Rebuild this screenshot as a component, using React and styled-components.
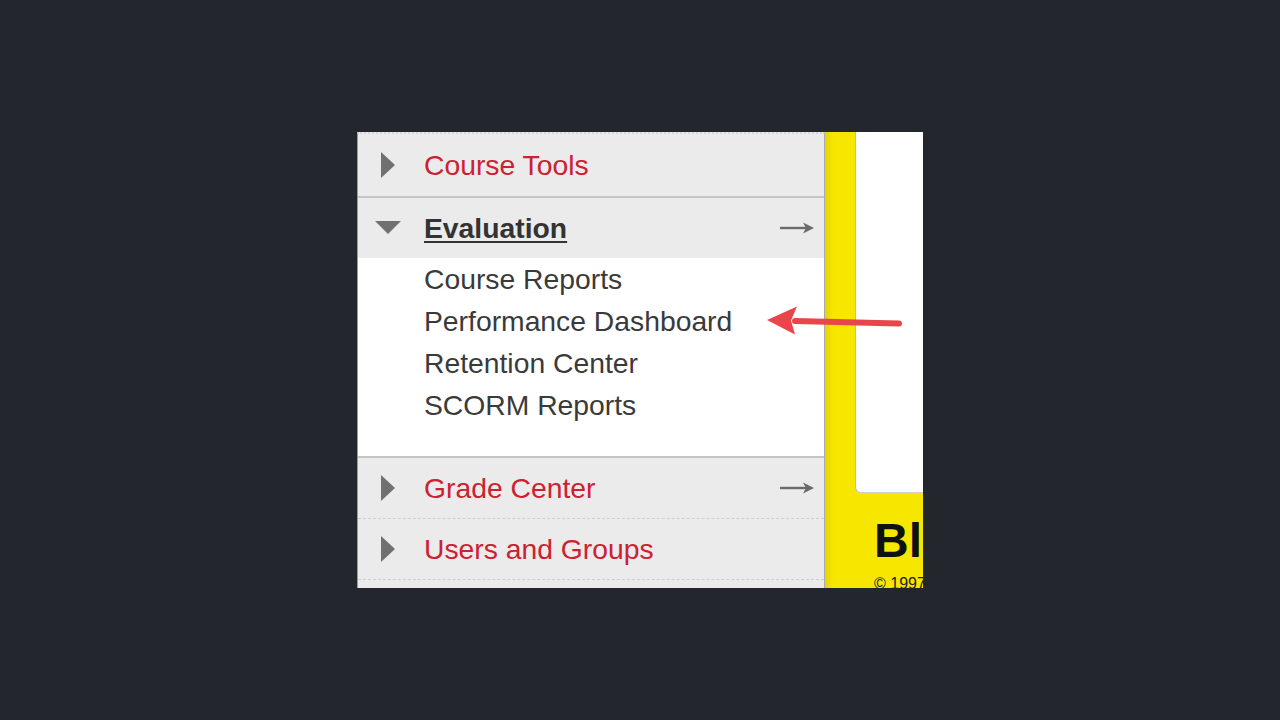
import React from "react";
import styled, { createGlobalStyle } from "styled-components";

const GlobalStyle = createGlobalStyle`
  html, body {
    margin: 0;
    padding: 0;
    background: #23262d;
  }
  body {
    font-family: "Liberation Sans", Arial, sans-serif;
  }
`;

const menu = [
  { label: "Course Tools", open: false, jump: false, edge: "solid" },
  {
    label: "Evaluation",
    open: true,
    jump: true,
    edge: "solid",
    items: ["Course Reports", "Performance Dashboard", "Retention Center", "SCORM Reports"],
  },
  { label: "Grade Center", open: false, jump: true, edge: "dotted" },
  { label: "Users and Groups", open: false, jump: false, edge: "dotted" },
];

const Caret = ({ open }) =>
  open ? (
    <svg width="26" height="14" viewBox="0 0 26 14">
      <polygon points="0,0 26,0 13,13" fill="#707070" />
    </svg>
  ) : (
    <svg width="14" height="26" viewBox="0 0 14 26">
      <polygon points="0,0 14,13 0,26" fill="#707070" />
    </svg>
  );

const JumpArrow = () => (
  <svg width="36" height="14" viewBox="0 0 36 14">
    <line x1="1" y1="7" x2="30" y2="7" stroke="#6a6a6a" strokeWidth="2.4" />
    <path d="M24 1.5 L35 7 L24 12.5 L27 7 Z" fill="#6a6a6a" />
  </svg>
);

const App = () => {
  return (
    <>
      <GlobalStyle />
      <Stage>
        <Frame>
          <Sidebar>
            {menu.map((m, i) => (
              <Section key={m.label} $edge={m.edge}>
                <Header $tall={i === 0}>
                  <CaretBox $open={m.open}>
                    <Caret open={m.open} />
                  </CaretBox>
                  <Title $open={m.open}>{m.label}</Title>
                  {m.jump && (
                    <JumpBox>
                      <JumpArrow />
                    </JumpBox>
                  )}
                </Header>
                {m.items && (
                  <SubList>
                    {m.items.map((it) => (
                      <SubItem key={it}>{it}</SubItem>
                    ))}
                  </SubList>
                )}
              </Section>
            ))}
          </Sidebar>
          <Content>
            <Card />
            <Brand>Blackboard</Brand>
            <Copy>© 1997-2019 Blackboard Inc.</Copy>
          </Content>
          <Pointer width="140" height="32" viewBox="0 0 140 32">
            <path
              d="M132 17.5 L28 15"
              stroke="#e9464c"
              strokeWidth="6"
              strokeLinecap="round"
              fill="none"
            />
            <path d="M0 14 L30 0.5 L24 14.5 L28 28.5 Z" fill="#e9464c" />
          </Pointer>
        </Frame>
      </Stage>
    </>
  );
};

const Stage = styled.div`
  width: 100vw;
  height: 100vh;
  display: flex;
  align-items: center;
  justify-content: center;
`;

const Frame = styled.div`
  position: relative;
  width: 566px;
  height: 456px;
  display: flex;
  overflow: hidden;
  background: #fff;
`;

const Sidebar = styled.div`
  width: 466px;
  flex-shrink: 0;
  border-left: 1px solid #9a9a9a;
  border-right: 1px solid #a9a9a9;
  border-top: 2px dotted #d6d6d6;
  background: #ebebeb;
  display: flex;
  flex-direction: column;
`;

const Section = styled.div`
  border-bottom: ${(p) => (p.$edge === "solid" ? "2px solid #c4c4c4" : "1px dashed #cfcfcf")};
`;

const Header = styled.div`
  height: ${(p) => (p.$tall ? "62px" : "60px")};
  display: flex;
  align-items: center;
  background: #ebebeb;
`;

const CaretBox = styled.div`
  width: 66px;
  flex-shrink: 0;
  display: flex;
  align-items: center;
  padding-left: ${(p) => (p.$open ? "17px" : "23px")};
  box-sizing: border-box;
`;

const Title = styled.span`
  flex: 1;
  font-size: 28.3px;
  line-height: 32px;
  color: ${(p) => (p.$open ? "#333333" : "#cc2131")};
  font-weight: ${(p) => (p.$open ? "bold" : "normal")};
  text-decoration: ${(p) => (p.$open ? "underline" : "none")};
  text-decoration-thickness: 2px;
  text-underline-offset: 3px;
`;

const JumpBox = styled.div`
  width: 36px;
  margin-right: 9px;
  display: flex;
  align-items: center;
`;

const SubList = styled.div`
  background: #fff;
  padding: 0 0 30px 66px;
`;

const SubItem = styled.div`
  font-size: 28.3px;
  line-height: 42px;
  color: #3a3a3a;
`;

const Content = styled.div`
  flex: 1;
  min-width: 0;
  padding-left: 30px;
  background: linear-gradient(90deg, #e4d200 0px, #f7e600 8px, #f7e600 100%);
  display: flex;
  flex-direction: column;
  overflow: hidden;
`;

const Card = styled.div`
  width: 200px;
  height: 360px;
  flex-shrink: 0;
  background: #fff;
  border-left: 1px solid #bdbdbd;
  border-bottom: 1px solid #cfcfcf;
  border-bottom-left-radius: 6px;
`;

const Brand = styled.div`
  margin: 22px 0 0 19px;
  font-size: 48px;
  font-weight: bold;
  line-height: 52px;
  color: #111;
  white-space: nowrap;
`;

const Copy = styled.div`
  margin: 8px 0 0 19px;
  font-size: 16px;
  color: #222;
  white-space: nowrap;
`;

const Pointer = styled.svg`
  position: absolute;
  left: 410px;
  top: 174px;
`;

export default App;
